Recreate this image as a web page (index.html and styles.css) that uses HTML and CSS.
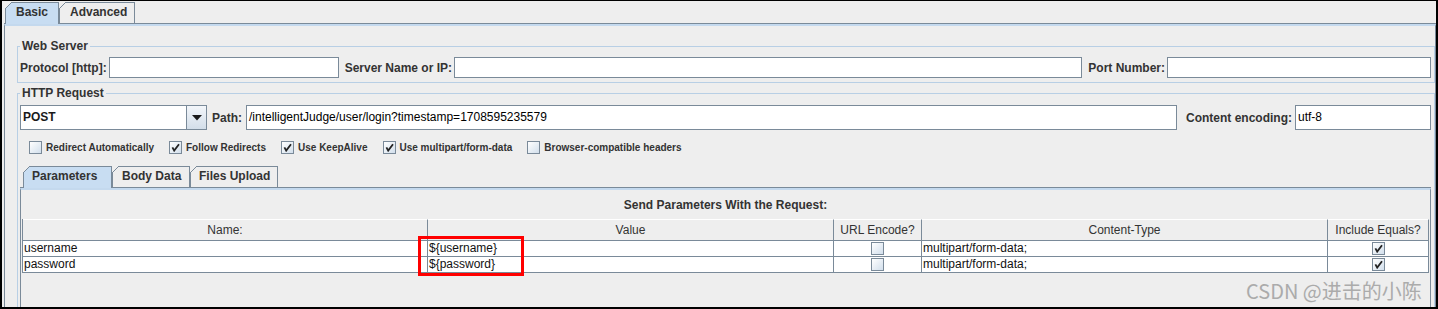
FILE: index.html
```html
<!DOCTYPE html>
<html>
<head>
<meta charset="utf-8">
<title>HTTP Request</title>
<link rel="stylesheet" href="styles.css">
</head>
<body>
<div class="frame">
  <div class="tabs">
    <div class="tab selected w-basic">Basic</div>
    <div class="tab w-adv">Advanced</div>
  </div>
  <div class="panel">
    <fieldset class="group group-web">
      <legend>Web Server</legend>
      <div class="row row-web">
        <span class="lbl">Protocol [http]:</span>
        <div class="field f-proto"></div>
        <span class="lbl lbl-gap">Server Name or IP:</span>
        <div class="field f-grow"></div>
        <span class="lbl lbl-gap">Port Number:</span>
        <div class="field f-port"></div>
      </div>
    </fieldset>
    <fieldset class="group group-http">
      <legend>HTTP Request</legend>
      <div class="row row-http">
        <div class="combo">
          <span class="combo-text">POST</span>
          <span class="combo-btn"><svg width="10" height="6" viewBox="0 0 10 6"><path d="M0 0 H10 L5 5.5 Z" fill="#1a1a1a"/></svg></span>
        </div>
        <span class="lbl lbl-path">Path:</span>
        <div class="field f-grow">/intelligentJudge/user/login?timestamp=1708595235579</div>
        <span class="lbl lbl-enc">Content encoding:</span>
        <div class="field f-enc">utf-8</div>
      </div>
      <div class="checks">
        <span class="chk"><span class="box"></span>Redirect Automatically</span>
        <span class="chk"><span class="box"><svg width="9" height="9" viewBox="0 0 9 9"><path d="M1.4 4.4 L3.2 7.6 L8 1.2" fill="none" stroke="#222" stroke-width="1.8"/></svg></span>Follow Redirects</span>
        <span class="chk"><span class="box"><svg width="9" height="9" viewBox="0 0 9 9"><path d="M1.4 4.4 L3.2 7.6 L8 1.2" fill="none" stroke="#222" stroke-width="1.8"/></svg></span>Use KeepAlive</span>
        <span class="chk"><span class="box"><svg width="9" height="9" viewBox="0 0 9 9"><path d="M1.4 4.4 L3.2 7.6 L8 1.2" fill="none" stroke="#222" stroke-width="1.8"/></svg></span>Use multipart/form-data</span>
        <span class="chk"><span class="box"></span>Browser-compatible headers</span>
      </div>
      <div class="subtabs">
        <div class="tab subtab selected w-params">Parameters</div>
        <div class="tab subtab w-body">Body Data</div>
        <div class="tab subtab w-files">Files Upload</div>
      </div>
      <div class="subpanel">
        <div class="caption">Send Parameters With the Request:</div>
        <table class="params">
          <thead>
            <tr>
              <th class="c-name">Name:</th>
              <th class="c-value">Value</th>
              <th class="c-url">URL Encode?</th>
              <th class="c-ct">Content-Type</th>
              <th class="c-eq">Include Equals?</th>
            </tr>
          </thead>
          <tbody>
            <tr>
              <td>username</td>
              <td>${username}</td>
              <td class="center"><span class="box cbox"></span></td>
              <td>multipart/form-data;</td>
              <td class="center"><span class="box cbox"><svg width="9" height="9" viewBox="0 0 9 9"><path d="M1.4 4.4 L3.2 7.6 L8 1.2" fill="none" stroke="#222" stroke-width="1.8"/></svg></span></td>
            </tr>
            <tr>
              <td>password</td>
              <td>${password}</td>
              <td class="center"><span class="box cbox"></span></td>
              <td>multipart/form-data;</td>
              <td class="center"><span class="box cbox"><svg width="9" height="9" viewBox="0 0 9 9"><path d="M1.4 4.4 L3.2 7.6 L8 1.2" fill="none" stroke="#222" stroke-width="1.8"/></svg></span></td>
            </tr>
          </tbody>
        </table>
      </div>
    </fieldset>
  </div>
  <div class="highlight"></div>
  <div class="watermark">CSDN @进击的小陈</div>
</div>
</body>
</html>
```

FILE: styles.css
```css
* { box-sizing: border-box; }

html, body {
  margin: 0;
  padding: 0;
  background: #eeeeee;
}

body {
  font-family: "Liberation Sans", Arial, "Noto Sans CJK SC", sans-serif;
  font-size: 12px;
  color: #333333;
}

.frame {
  position: relative;
  width: 1438px;
  height: 309px;
  overflow: hidden;
  border: 2px solid #000;
  border-top-width: 1px;
  padding-left: 2px;
  background: #eeeeee;
  display: flex;
  flex-direction: column;
}

/* ---------- tabs ---------- */
.tabs {
  display: flex;
  padding-top: 1px;
  padding-left: 1px;
  border-bottom: 1px solid #7a8a99;
  flex: none;
}

.tab {
  position: relative;
  height: 21px;
  border: 1px solid #7a8a99;
  border-bottom: none;
  background: #eeeeee;
  font-weight: bold;
  line-height: 19px;
  padding-left: 10px;
  white-space: nowrap;
  color: #333;
}

.tab::before {
  content: "";
  position: absolute;
  left: -1px;
  top: -1px;
  width: 7px;
  height: 7px;
  background: linear-gradient(to bottom right,
    #eeeeee calc(50% - 0.6px),
    #7a8a99 calc(50% - 0.6px),
    #7a8a99 calc(50% + 0.6px),
    transparent calc(50% + 0.6px));
}

.tab.selected {
  background: #c8ddf2;
  height: 22px;
  margin-bottom: -1px;
}

.w-basic { width: 54px; }
.w-adv { width: 76px; }

.subtab { padding-left: 8px; }
.w-params { width: 89px; }
.w-body { width: 78px; padding-left: 9px; }
.w-files { width: 88px; }

/* ---------- main panel ---------- */
.panel {
  flex: 1;
  border-left: 1px solid #7a8a99;
  border-right: 1px solid #7a8a99;
  border-top: 2px solid #c4d9ee;
  padding: 13px 0 0 12px;
}

.group {
  margin: 0;
  min-width: 0;
  border: 1px solid #b8cfe5;
  padding: 4px 3px 4px 2px;
}

.group legend {
  padding: 0 2px;
  font-weight: bold;
  line-height: 14px;
  color: #333;
}

.group-http {
  margin-top: 3px;
  padding-top: 5px;
  padding-bottom: 0;
}

.row {
  display: flex;
  align-items: center;
}

.row-web { height: 21px; }
.row-http { height: 25px; }

.lbl {
  font-weight: bold;
  white-space: nowrap;
  margin-right: 3px;
  color: #333;
}

.row-web .lbl { margin-right: 2px; }
.lbl-gap { margin-left: 6px; }
.lbl-path { margin-left: 5px; margin-right: 4px; }
.lbl-enc { margin-left: 9px; margin-right: 3px; }

.field {
  height: 21px;
  background: #fff;
  border: 1px solid #7a8a99;
  padding-left: 2px;
  line-height: 19px;
  color: #000;
  white-space: nowrap;
  overflow: hidden;
}

.row-http .field {
  height: 25px;
  line-height: 23px;
}

.f-proto { width: 230px; }
.f-grow { flex: 1; min-width: 0; }
.f-port { width: 264px; }
.f-enc { width: 136px; }

.combo {
  width: 187px;
  height: 25px;
  display: flex;
  border: 1px solid #7a8a99;
  background: #fff;
}

.combo-text {
  flex: 1;
  font-weight: bold;
  line-height: 23px;
  padding-left: 2px;
  color: #1a1a1a;
}

.combo-btn {
  width: 20px;
  border-left: 1px solid #7a8a99;
  background: linear-gradient(#f3f6fa, #d3dee9);
  display: flex;
  align-items: center;
  justify-content: center;
}

/* ---------- checkboxes ---------- */
.checks {
  display: flex;
  align-items: center;
  height: 13px;
  margin-top: 11px;
  padding-left: 9px;
}

.chk {
  display: flex;
  align-items: center;
  font-size: 10px;
  font-weight: bold;
  margin-right: 15px;
  white-space: nowrap;
  color: #333;
}

.box {
  width: 13px;
  height: 13px;
  border: 1px solid #7a8a99;
  background: linear-gradient(135deg, #ffffff, #d2dfec);
  margin-right: 4px;
  display: flex;
  align-items: center;
  justify-content: center;
  flex: none;
}

/* ---------- sub tabs ---------- */
.subtabs {
  display: flex;
  margin-top: 12px;
  padding-left: 3px;
  border-bottom: 1px solid #7a8a99;
}

.subpanel {
  border-left: 1px solid #7a8a99;
  border-right: 1px solid #7a8a99;
  border-top: 2px solid #c4d9ee;
  padding: 0 1px;
  height: 200px;
}

.caption {
  height: 29px;
  line-height: 30px;
  text-align: center;
  font-weight: bold;
  color: #333;
}

/* ---------- table ---------- */
.params {
  border-collapse: separate;
  border-spacing: 0;
  table-layout: fixed;
  width: 1407px;
  border-left: 1px solid #7a8a99;
  background: #fff;
}

.params th {
  font-weight: normal;
  line-height: 20px;
  padding: 0;
  border-top: 1px solid #fff;
  border-right: 1px solid #7a8a99;
  border-bottom: 1px solid #7a8a99;
  background: #eeeeee;
  color: #333;
  white-space: nowrap;
}

.c-name { width: 405px; }
.c-value { width: 406px; }
.c-url { width: 88px; }
.c-ct { width: 406px; }
.c-eq { width: 101px; }

.params td {
  line-height: 15px;
  padding: 0 0 0 1px;
  border-right: 1px solid #7a8a99;
  border-bottom: 1px solid #7a8a99;
  white-space: nowrap;
  overflow: hidden;
  color: #111;
}

.params td.center {
  padding: 0;
  text-align: center;
}

.cbox {
  display: inline-flex;
  vertical-align: top;
  margin: 1px 0 0 0;
}

/* ---------- overlays ---------- */
.highlight {
  position: absolute;
  left: 416px;
  top: 235px;
  width: 106px;
  height: 40px;
  border: 3px solid #f00;
}

.watermark {
  position: absolute;
  left: 1244px;
  top: 277px;
  font-family: "Noto Sans CJK SC", "Liberation Sans", sans-serif;
  font-size: 20px;
  line-height: 26px;
  color: #ababab;
  white-space: nowrap;
}
```
